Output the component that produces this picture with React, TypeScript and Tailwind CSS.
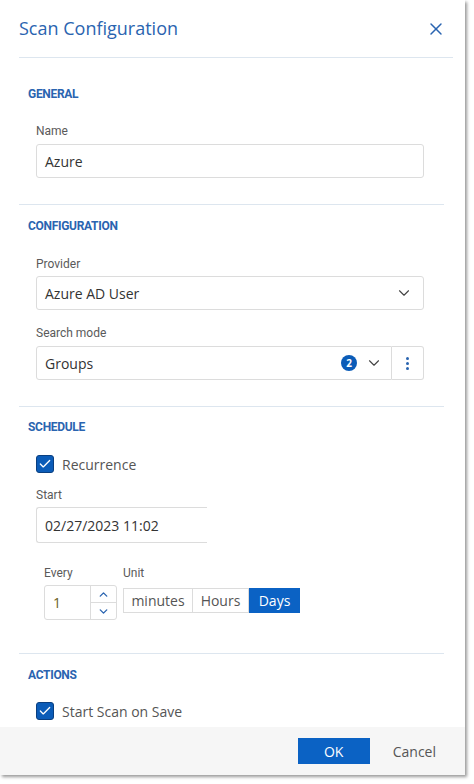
import { ChevronDown, ChevronUp, X, Check } from 'lucide-react';

const sans = "font-['Open_Sans','Noto_Sans',sans-serif]";
const label = "font-['Roboto','Noto_Sans',sans-serif] text-[12px] leading-4 text-[#5a5a5a]";
const heading = "font-['Roboto','Noto_Sans',sans-serif] text-[12px] leading-4 font-bold text-[#2a64b0] tracking-tight";

function CheckRow({ text }: { text: string }) {
  return (
    <div className="flex items-center gap-2 h-[18px]">
      <div className="w-[18px] h-[18px] rounded-[3px] bg-[#0b5cb8] border border-[#0a3f80] flex items-center justify-center">
        <Check size={14} strokeWidth={2.25} className="text-white" />
      </div>
      <span className={`${sans} text-[14px] text-[#555]`}>{text}</span>
    </div>
  );
}

export default function App() {
  return (
    <div className="w-[474px] h-[784px] bg-white">
      <div className="w-[465px] h-[775px] bg-white flex flex-col shadow-[2px_2px_3px_rgba(0,0,0,0.4)]">
        {/* header */}
        <div className="ml-[19px] mr-[12px] h-[58px] flex items-center justify-between border-b border-[#dde6ef]">
          <h1 className={`${sans} text-[18px] font-medium text-[#2a64b0] pb-[1px]`}>Scan Configuration</h1>
          <X size={20} strokeWidth={1.75} className="text-[#2a64b0] mr-[7px]" />
        </div>

        <div className="flex-1">
          {/* general */}
          <section className="ml-[19px] mr-[21px] border-b border-[#dde6ef] pt-[28px] pb-[26px]">
            <div className={`${heading} pl-[9px]`}>GENERAL</div>
            <div className="pl-[17px] pr-[20px] mt-[21px]">
              <div className={label}>Name</div>
              <div className={`mt-[5px] h-[34px] border border-[#dcdcdc] rounded-[3px] flex items-center px-2 ${sans} text-[14px] text-[#333]`}>
                Azure
              </div>
            </div>
          </section>

          {/* configuration */}
          <section className="ml-[19px] mr-[21px] border-b border-[#dde6ef] pt-[13px] pb-[26px]">
            <div className={`${heading} pl-[9px]`}>CONFIGURATION</div>
            <div className="pl-[17px] pr-[20px]">
              <div className={`${label} mt-[22px]`}>Provider</div>
              <div className={`mt-[4px] h-[34px] border border-[#dcdcdc] rounded-[3px] flex items-center justify-between pl-2 pr-[10px] ${sans} text-[14px] text-[#333]`}>
                <span>Azure AD User</span>
                <ChevronDown size={18} strokeWidth={1.5} className="text-[#444]" />
              </div>
              <div className={`${label} mt-[15px]`}>Search mode</div>
              <div className="mt-[5px] h-[34px] flex">
                <div className={`flex-1 border border-[#dcdcdc] rounded-l-[3px] flex items-center justify-between pl-2 pr-[8px] ${sans} text-[14px] text-[#333]`}>
                  <span>Groups</span>
                  <div className="flex items-center gap-[8px]">
                    <span className="w-[16px] h-[16px] rounded-full bg-[#0b5cb8] text-white text-[10px] font-bold flex items-center justify-center">2</span>
                    <ChevronDown size={18} strokeWidth={1.5} className="text-[#444]" />
                  </div>
                </div>
                <div className="w-[32px] border border-l-0 border-[#dcdcdc] rounded-r-[3px] flex flex-col items-center justify-center gap-[2px]">
                  <span className="w-[3px] h-[3px] rounded-full bg-[#2a64b0]" />
                  <span className="w-[3px] h-[3px] rounded-full bg-[#2a64b0]" />
                  <span className="w-[3px] h-[3px] rounded-full bg-[#2a64b0]" />
                </div>
              </div>
            </div>
          </section>

          {/* schedule */}
          <section className="ml-[19px] mr-[21px] border-b border-[#dde6ef] pt-[12px] pb-[33px]">
            <div className={`${heading} pl-[9px]`}>SCHEDULE</div>
            <div className="pl-[17px]">
              <div className="mt-[20px]">
                <CheckRow text="Recurrence" />
              </div>
              <div className={`${label} mt-[14px]`}>Start</div>
              <div className={`mt-[4px] w-[171px] h-[36px] border border-r-0 border-[#dcdcdc] rounded-l-[3px] flex items-center px-2 ${sans} text-[14px] text-[#333]`}>
                02/27/2023 11:02
              </div>
              <div className="mt-[22px] pl-[8px] flex gap-[6px]">
                <div>
                  <div className={label}>Every</div>
                  <div className="mt-[4px] w-[73px] h-[35px] border border-[#dcdcdc] rounded-[3px] flex">
                    <div className={`flex-1 flex items-center pl-[8px] ${sans} text-[14px] text-[#6d5f22]`}>1</div>
                    <div className="w-[26px] border-l border-[#dcdcdc] flex flex-col">
                      <div className="flex-1 flex items-center justify-center border-b border-[#dcdcdc]">
                        <ChevronUp size={13} strokeWidth={2.5} className="text-[#2a64b0]" />
                      </div>
                      <div className="flex-1 flex items-center justify-center">
                        <ChevronDown size={13} strokeWidth={2.5} className="text-[#2a64b0]" />
                      </div>
                    </div>
                  </div>
                </div>
                <div>
                  <div className={label}>Unit</div>
                  <div className={`mt-[7px] h-[25px] flex ${sans} text-[14px]`}>
                    <div className="w-[70px] border border-[#dcdcdc] flex items-center justify-center text-[#555]">minutes</div>
                    <div className="w-[56px] border border-l-0 border-[#dcdcdc] flex items-center justify-center text-[#555]">Hours</div>
                    <div className="w-[51px] bg-[#0b62c4] flex items-center justify-center text-white">Days</div>
                  </div>
                </div>
              </div>
            </div>
          </section>

          {/* actions */}
          <section className="ml-[19px] mr-[21px] pt-[13px]">
            <div className={`${heading} pl-[9px]`}>ACTIONS</div>
            <div className="pl-[17px] mt-[19px]">
              <CheckRow text="Start Scan on Save" />
            </div>
          </section>
        </div>

        {/* footer */}
        <div className="h-[48px] bg-[#f6f6f6] flex items-center justify-end pr-[29px] gap-[23px]">
          <button className={`w-[72px] h-[26px] bg-[#0b62c4] text-white ${sans} text-[14px]`}>OK</button>
          <span className={`${sans} text-[14px] text-[#555]`}>Cancel</span>
        </div>
      </div>
    </div>
  );
}
